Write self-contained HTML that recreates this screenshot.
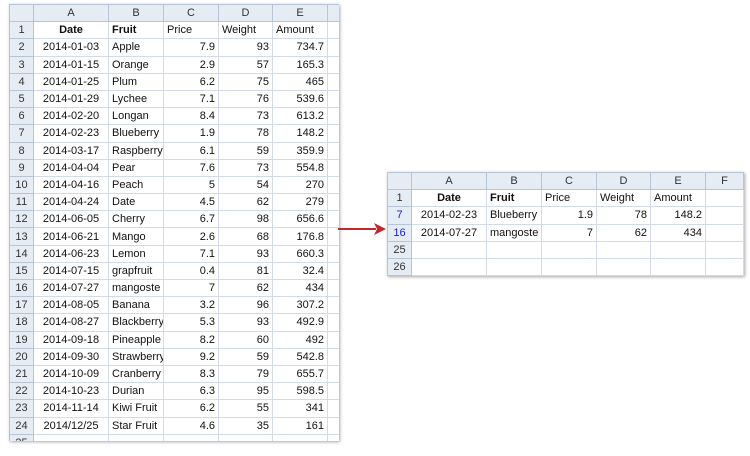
<!DOCTYPE html>
<html><head><meta charset="utf-8"><style>
body{margin:0;width:750px;height:456px;background:#fff;position:relative;overflow:hidden;font-family:"Liberation Sans",Arial,sans-serif;font-size:11px;color:#111}
.g{position:absolute;border-collapse:collapse;table-layout:fixed;box-shadow:1px 1px 3px rgba(0,0,0,.35)}
.g td{border:1px solid #d4dbe6;padding:0 3px;white-space:nowrap;overflow:hidden;height:16.2px;line-height:16px}
.g tr.h td{background:#e6ecf4;border-color:#b6c4d6;text-align:center;color:#333}
.g td.r{background:#e6ecf4;border-color:#b6c4d6;text-align:center;color:#333;padding:0}
.n{text-align:right}.c{text-align:center}.b{font-weight:bold}
.bl{color:#1a1ae0 !important}
</style></head><body>
<div style="position:absolute;left:9px;top:4px;width:330px;height:437px;overflow:hidden;box-shadow:1px 1px 3px rgba(0,0,0,.35)">
<table class="g" style="left:0;top:0;box-shadow:none;width:340px">
<colgroup><col style="width:24px"><col style="width:75px"><col style="width:55px"><col style="width:55px"><col style="width:54px"><col style="width:55px"><col style="width:22px"></colgroup>
<tr class="h"><td></td><td>A</td><td>B</td><td>C</td><td>D</td><td>E</td><td></td></tr>
<tr><td class="r">1</td><td class="c b">Date</td><td class="b">Fruit</td><td>Price</td><td>Weight</td><td>Amount</td><td></td></tr>
<tr><td class="r">2</td><td class="c">2014-01-03</td><td>Apple</td><td class="n">7.9</td><td class="n">93</td><td class="n">734.7</td><td></td></tr>
<tr><td class="r">3</td><td class="c">2014-01-15</td><td>Orange</td><td class="n">2.9</td><td class="n">57</td><td class="n">165.3</td><td></td></tr>
<tr><td class="r">4</td><td class="c">2014-01-25</td><td>Plum</td><td class="n">6.2</td><td class="n">75</td><td class="n">465</td><td></td></tr>
<tr><td class="r">5</td><td class="c">2014-01-29</td><td>Lychee</td><td class="n">7.1</td><td class="n">76</td><td class="n">539.6</td><td></td></tr>
<tr><td class="r">6</td><td class="c">2014-02-20</td><td>Longan</td><td class="n">8.4</td><td class="n">73</td><td class="n">613.2</td><td></td></tr>
<tr><td class="r">7</td><td class="c">2014-02-23</td><td>Blueberry</td><td class="n">1.9</td><td class="n">78</td><td class="n">148.2</td><td></td></tr>
<tr><td class="r">8</td><td class="c">2014-03-17</td><td>Raspberry</td><td class="n">6.1</td><td class="n">59</td><td class="n">359.9</td><td></td></tr>
<tr><td class="r">9</td><td class="c">2014-04-04</td><td>Pear</td><td class="n">7.6</td><td class="n">73</td><td class="n">554.8</td><td></td></tr>
<tr><td class="r">10</td><td class="c">2014-04-16</td><td>Peach</td><td class="n">5</td><td class="n">54</td><td class="n">270</td><td></td></tr>
<tr><td class="r">11</td><td class="c">2014-04-24</td><td>Date</td><td class="n">4.5</td><td class="n">62</td><td class="n">279</td><td></td></tr>
<tr><td class="r">12</td><td class="c">2014-06-05</td><td>Cherry</td><td class="n">6.7</td><td class="n">98</td><td class="n">656.6</td><td></td></tr>
<tr><td class="r">13</td><td class="c">2014-06-21</td><td>Mango</td><td class="n">2.6</td><td class="n">68</td><td class="n">176.8</td><td></td></tr>
<tr><td class="r">14</td><td class="c">2014-06-23</td><td>Lemon</td><td class="n">7.1</td><td class="n">93</td><td class="n">660.3</td><td></td></tr>
<tr><td class="r">15</td><td class="c">2014-07-15</td><td>grapfruit</td><td class="n">0.4</td><td class="n">81</td><td class="n">32.4</td><td></td></tr>
<tr><td class="r">16</td><td class="c">2014-07-27</td><td>mangoste</td><td class="n">7</td><td class="n">62</td><td class="n">434</td><td></td></tr>
<tr><td class="r">17</td><td class="c">2014-08-05</td><td>Banana</td><td class="n">3.2</td><td class="n">96</td><td class="n">307.2</td><td></td></tr>
<tr><td class="r">18</td><td class="c">2014-08-27</td><td>Blackberry</td><td class="n">5.3</td><td class="n">93</td><td class="n">492.9</td><td></td></tr>
<tr><td class="r">19</td><td class="c">2014-09-18</td><td>Pineapple</td><td class="n">8.2</td><td class="n">60</td><td class="n">492</td><td></td></tr>
<tr><td class="r">20</td><td class="c">2014-09-30</td><td>Strawberry</td><td class="n">9.2</td><td class="n">59</td><td class="n">542.8</td><td></td></tr>
<tr><td class="r">21</td><td class="c">2014-10-09</td><td>Cranberry</td><td class="n">8.3</td><td class="n">79</td><td class="n">655.7</td><td></td></tr>
<tr><td class="r">22</td><td class="c">2014-10-23</td><td>Durian</td><td class="n">6.3</td><td class="n">95</td><td class="n">598.5</td><td></td></tr>
<tr><td class="r">23</td><td class="c">2014-11-14</td><td>Kiwi Fruit</td><td class="n">6.2</td><td class="n">55</td><td class="n">341</td><td></td></tr>
<tr><td class="r">24</td><td class="c">2014/12/25</td><td>Star Fruit</td><td class="n">4.6</td><td class="n">35</td><td class="n">161</td><td></td></tr>
<tr><td class="r">25</td><td></td><td></td><td></td><td></td><td></td><td></td></tr>
</table></div>
<svg style="position:absolute;left:336px;top:222px" width="52" height="14"><line x1="2" y1="7" x2="40" y2="7" stroke="#c0282d" stroke-width="2"/><polygon points="38,1 50,7 38,13 41,7" fill="#c0282d"/></svg>
<table class="g" style="left:387px;top:172px;width:356px">
<colgroup><col style="width:24px"><col style="width:75px"><col style="width:55px"><col style="width:55px"><col style="width:54px"><col style="width:55px"><col style="width:38px"></colgroup>
<tr class="h"><td></td><td>A</td><td>B</td><td>C</td><td>D</td><td>E</td><td>F</td></tr>
<tr><td class="r">1</td><td class="c b">Date</td><td class="b">Fruit</td><td>Price</td><td>Weight</td><td>Amount</td><td></td></tr>
<tr><td class="r bl">7</td><td class="c">2014-02-23</td><td>Blueberry</td><td class="n">1.9</td><td class="n">78</td><td class="n">148.2</td><td></td></tr>
<tr><td class="r bl">16</td><td class="c">2014-07-27</td><td>mangoste</td><td class="n">7</td><td class="n">62</td><td class="n">434</td><td></td></tr>
<tr><td class="r">25</td><td></td><td></td><td></td><td></td><td></td><td></td></tr>
<tr><td class="r">26</td><td></td><td></td><td></td><td></td><td></td><td></td></tr>
</table>
</body></html>
